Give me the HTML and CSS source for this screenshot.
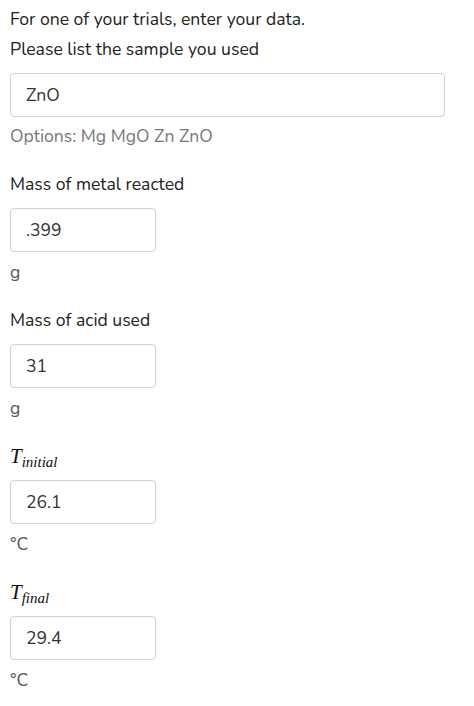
FILE: index.html
```html
<!DOCTYPE html>
<html lang="en">
<head>
  <meta charset="UTF-8">
  <meta name="viewport" content="width=device-width, initial-scale=1.0">
  <title>Trial Data</title>
  <link rel="stylesheet" href="styles.css">
</head>
<body>
  <p class="intro">For one of your trials, enter your data.</p>

  <div class="question">
    <label class="prompt" for="sample">Please list the sample you used</label>
    <input class="answer wide" id="sample" type="text" value="ZnO">
    <div class="hint">Options: Mg MgO Zn ZnO</div>
  </div>

  <div class="question">
    <label class="prompt" for="metal">Mass of metal reacted</label>
    <input class="answer" id="metal" type="text" value=".399">
    <div class="unit">g</div>
  </div>

  <div class="question">
    <label class="prompt" for="acid">Mass of acid used</label>
    <input class="answer" id="acid" type="text" value="31">
    <div class="unit">g</div>
  </div>

  <div class="question">
    <label class="prompt math" for="tinit"><i class="var">T</i><sub>initial</sub></label>
    <input class="answer" id="tinit" type="text" value="26.1">
    <div class="unit">°C</div>
  </div>

  <div class="question">
    <label class="prompt math" for="tfinal"><i class="var">T</i><sub>final</sub></label>
    <input class="answer" id="tfinal" type="text" value="29.4">
    <div class="unit">°C</div>
  </div>
</body>
</html>
```

FILE: styles.css
```css
body {
  font-family: Nunito, Lato, 'Open Sans', sans-serif;
  font-size: 17.6px;
  line-height: 24px;
  color: #222;
  margin: 0;
  padding: 7px 10px 0;
  background: #fff;
}

.intro {
  margin: 0 0 6px;
}

.question {
  display: flex;
  flex-direction: column;
  align-items: flex-start;
  margin-bottom: 24px;
}

.prompt {
  display: block;
  height: 24px;
  margin-bottom: 12px;
}

.answer {
  box-sizing: border-box;
  width: 146px;
  height: 44px;
  padding: 0 15px;
  border: 1px solid #d0d0d0;
  border-radius: 4px;
  font-family: inherit;
  font-size: 17.6px;
  color: #333;
  background: #fff;
}

.answer.wide {
  width: 435px;
}

.hint {
  margin-top: 7px;
  color: #777;
}

.unit {
  margin-top: 8px;
  color: #555;
}

.math {
  font-family: 'Liberation Serif', serif;
  color: #111;
}

.math .var {
  font-size: 21px;
}

.math sub {
  font-style: italic;
  font-size: 15px;
  vertical-align: -4px;
  line-height: 0;
}
```
